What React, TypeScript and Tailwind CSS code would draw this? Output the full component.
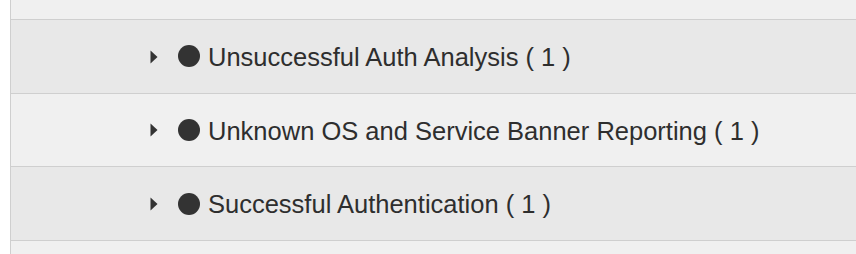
import React from "react";

const groups = [
  { name: "Unsuccessful Auth Analysis", count: 1 },
  { name: "Unknown OS and Service Banner Reporting", count: 1 },
  { name: "Successful Authentication", count: 1 },
];

function GroupRow({ name, count, shaded }: { name: string; count: number; shaded: boolean }) {
  return (
    <div
      className={`h-[73.67px] border-t border-[#cfcfcf] flex items-center pl-[139px] ${
        shaded ? "bg-[#e8e8e8]" : "bg-[#f0f0f0]"
      }`}
    >
      {/* caret */}
      <svg width="8" height="14" viewBox="0 0 8 14" className="shrink-0 mt-[1px]">
        <path d="M0.5 0.5 L7.5 7 L0.5 13.5 Z" fill="#333" />
      </svg>
      {/* status dot */}
      <span className="ml-[20px] w-[22px] h-[22px] rounded-full bg-[#333] shrink-0" />
      <span className="ml-[8px] mt-[3px] text-[25.5px] leading-none text-[#2e2e2e] whitespace-nowrap">
        {name} ( {count} )
      </span>
    </div>
  );
}

export default function App() {
  return (
    <div
      className="w-[856px] h-[254px] bg-white pl-[10px] overflow-hidden"
      style={{ fontFamily: '"Liberation Sans", Arial, sans-serif' }}
    >
      <div className="h-full border-l border-[#cfcfcf] bg-[#f0f0f0]">
        <div className="h-[19px]" />
        {groups.map((g, i) => (
          <GroupRow key={g.name} name={g.name} count={g.count} shaded={i % 2 === 0} />
        ))}
        <div className="border-t border-[#cfcfcf]" />
      </div>
    </div>
  );
}
